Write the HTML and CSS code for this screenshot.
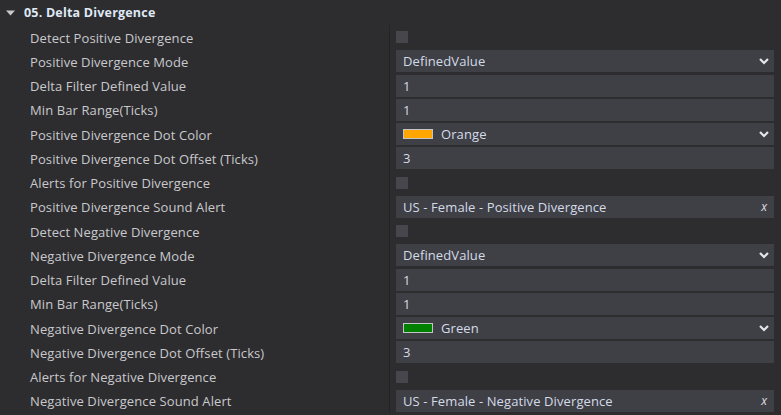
FILE: index.html
```html
<!DOCTYPE html>
<html>
<head>
<meta charset="utf-8">
<link rel="stylesheet" href="styles.css">
</head>
<body>
<div class="panel">
  <div class="header">
    <svg class="caret" width="9" height="6" viewBox="0 0 9 6"><path d="M0 0.5 L9 0.5 L4.5 5.5 Z" fill="#c8c8cc"/></svg>
    <span class="title">05. Delta Divergence</span>
  </div>
  <div class="grid">
    <div class="label">Detect Positive Divergence</div>
    <div class="value"><span class="check"></span></div>

    <div class="label">Positive Divergence Mode</div>
    <div class="value"><div class="field select"><span class="txt">DefinedValue</span><svg class="chev" width="10" height="7" viewBox="0 0 10 7"><path d="M1 1 L5 5 L9 1" stroke="#e6e6ea" stroke-width="2.2" fill="none"/></svg></div></div>

    <div class="label">Delta Filter Defined Value</div>
    <div class="value"><div class="field"><span class="txt">1</span></div></div>

    <div class="label">Min Bar Range(Ticks)</div>
    <div class="value"><div class="field"><span class="txt">1</span></div></div>

    <div class="label">Positive Divergence Dot Color</div>
    <div class="value"><div class="field select"><span class="swatch orange"></span><span class="txt">Orange</span><svg class="chev" width="10" height="7" viewBox="0 0 10 7"><path d="M1 1 L5 5 L9 1" stroke="#e6e6ea" stroke-width="2.2" fill="none"/></svg></div></div>

    <div class="label">Positive Divergence Dot Offset (Ticks)</div>
    <div class="value"><div class="field"><span class="txt">3</span></div></div>

    <div class="label">Alerts for Positive Divergence</div>
    <div class="value"><span class="check"></span></div>

    <div class="label">Positive Divergence Sound Alert</div>
    <div class="value"><div class="field select"><span class="txt">US - Female - Positive Divergence</span><span class="clear">x</span></div></div>

    <div class="label">Detect Negative Divergence</div>
    <div class="value"><span class="check"></span></div>

    <div class="label">Negative Divergence Mode</div>
    <div class="value"><div class="field select"><span class="txt">DefinedValue</span><svg class="chev" width="10" height="7" viewBox="0 0 10 7"><path d="M1 1 L5 5 L9 1" stroke="#e6e6ea" stroke-width="2.2" fill="none"/></svg></div></div>

    <div class="label">Delta Filter Defined Value</div>
    <div class="value"><div class="field"><span class="txt">1</span></div></div>

    <div class="label">Min Bar Range(Ticks)</div>
    <div class="value"><div class="field"><span class="txt">1</span></div></div>

    <div class="label">Negative Divergence Dot Color</div>
    <div class="value"><div class="field select"><span class="swatch green"></span><span class="txt">Green</span><svg class="chev" width="10" height="7" viewBox="0 0 10 7"><path d="M1 1 L5 5 L9 1" stroke="#e6e6ea" stroke-width="2.2" fill="none"/></svg></div></div>

    <div class="label">Negative Divergence Dot Offset (Ticks)</div>
    <div class="value"><div class="field"><span class="txt">3</span></div></div>

    <div class="label">Alerts for Negative Divergence</div>
    <div class="value"><span class="check"></span></div>

    <div class="label">Negative Divergence Sound Alert</div>
    <div class="value"><div class="field select"><span class="txt">US - Female - Negative Divergence</span><span class="clear">x</span></div></div>
  </div>
</div>
</body>
</html>
```

FILE: styles.css
```css
html, body {
  margin: 0;
  padding: 0;
  background: #2d2d30;
  overflow: hidden;
}
body {
  width: 781px;
  height: 415px;
  font-family: "Open Sans", "Noto Sans", sans-serif;
  font-size: 13px;
  letter-spacing: 0.1px;
}
.panel {
  display: flex;
  flex-direction: column;
}
.header {
  height: 25px;
  display: flex;
  align-items: center;
  padding-left: 6px;
  gap: 9px;
}
.caret {
  display: block;
}
.title {
  color: #dfe8f4;
  font-weight: 700;
  font-size: 12.5px;
  letter-spacing: 0.2px;
}
.grid {
  display: grid;
  grid-template-columns: 389px 1fr;
  grid-auto-rows: 24.25px;
}
.label {
  color: #c9c9cc;
  padding-left: 30px;
  display: flex;
  align-items: center;
  white-space: nowrap;
  overflow: hidden;
  padding-top: 1px;
}
.value {
  border-left: 1px solid #242426;
  padding: 0 7px 0 6px;
  display: flex;
  align-items: center;
}
.check {
  width: 12px;
  height: 12px;
  background: #46464c;
  display: block;
}
.field {
  flex: 1;
  height: 22px;
  background: #3f3f46;
  display: flex;
  align-items: center;
  padding: 0 7px;
  color: #d3dbe6;
}
.txt {
  flex: 1;
  white-space: nowrap;
}
.swatch {
  width: 28px;
  height: 8px;
  border: 1px solid #c4c4c4;
  margin-right: 8px;
  display: block;
}
.swatch.orange { background: #ffa500; }
.swatch.green { background: #008000; }
.chev {
  display: block;
  margin-right: -2px;
}
.clear {
  font-style: italic;
  color: #e0e0e4;
  font-size: 12px;
  margin-right: 0;
}
```
